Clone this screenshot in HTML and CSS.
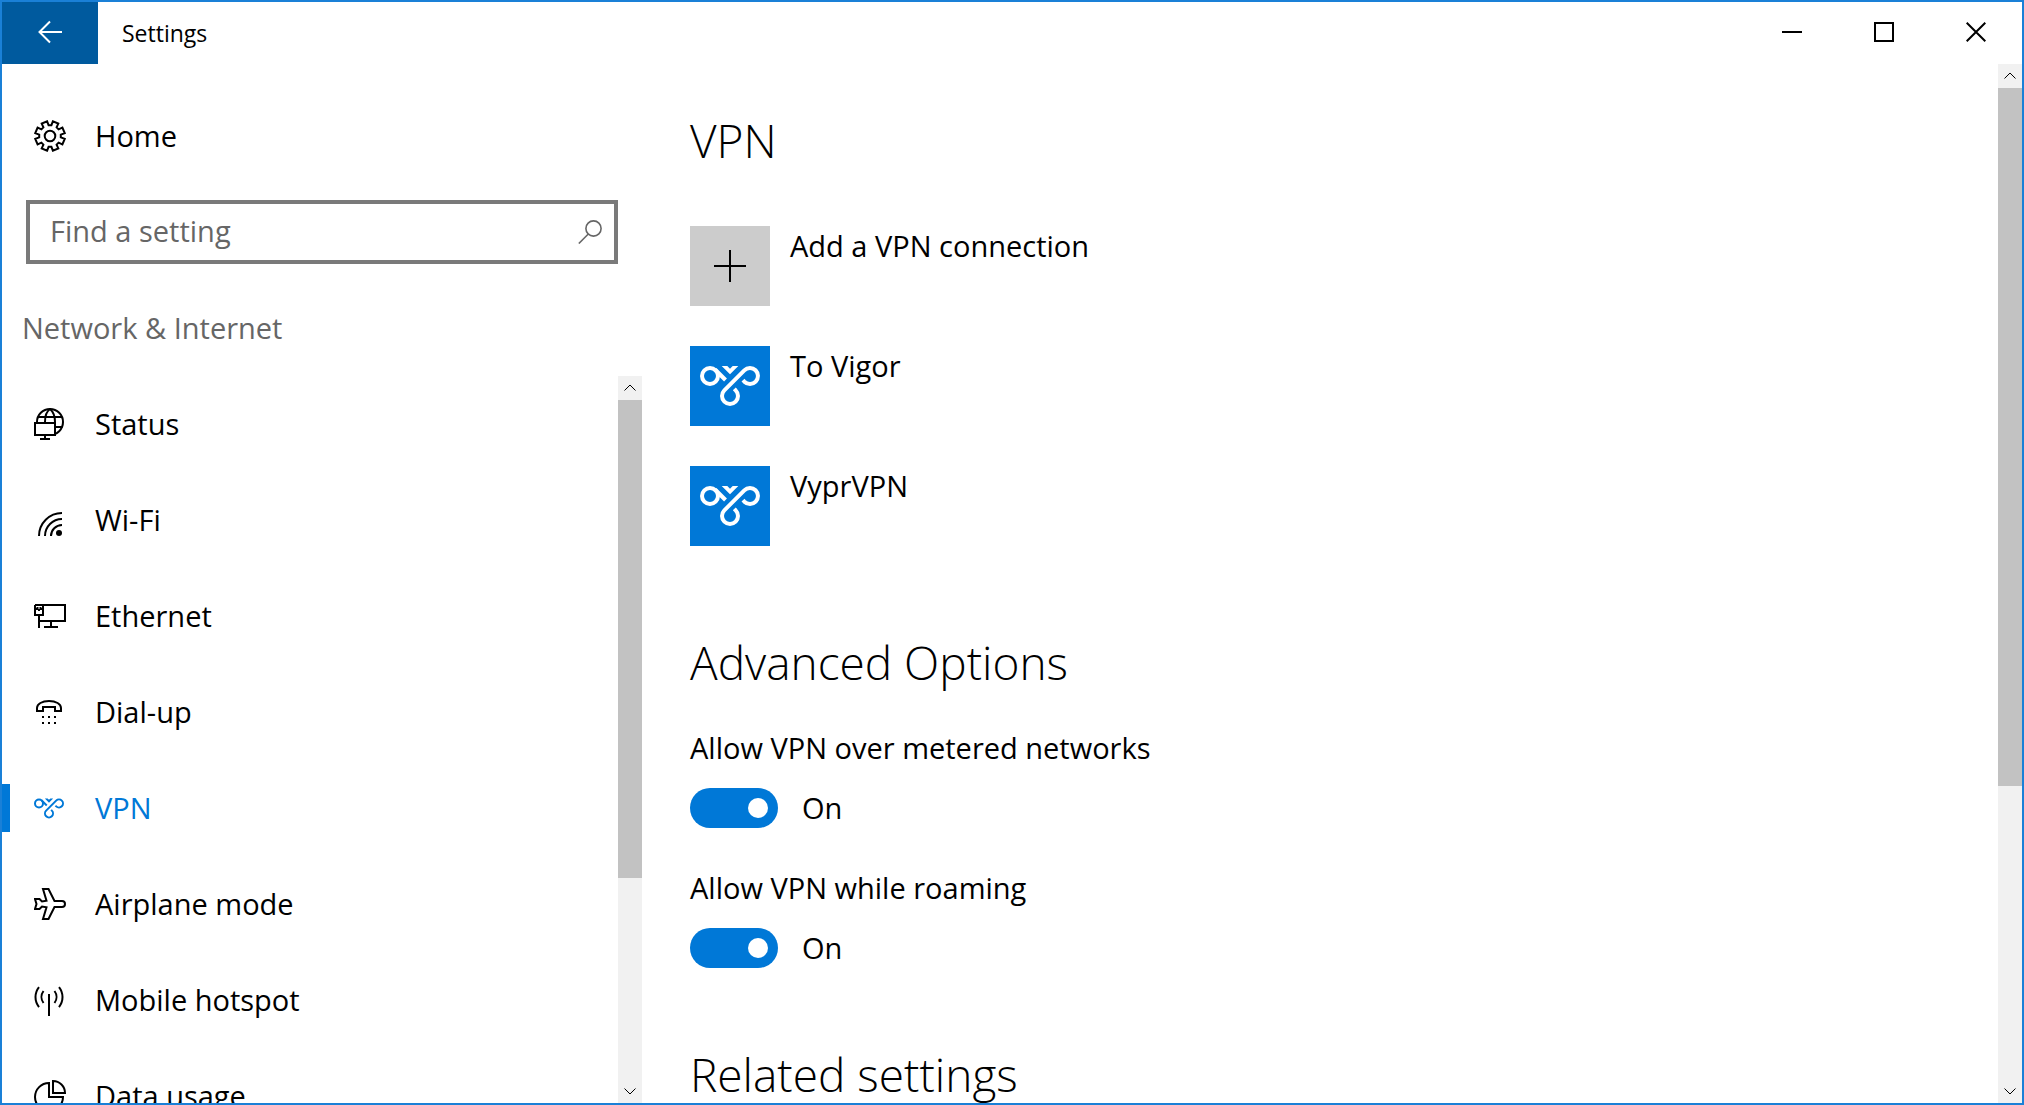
FILE: index.html
```html
<!DOCTYPE html>
<html lang="en">
<head>
  <meta charset="UTF-8" />
  <title>Settings</title>
  <meta name="viewport" content="width=device-width, initial-scale=1.0" />
  <link rel="stylesheet" href="styles.css">
</head>
<body>

<!-- shared icons -->
<svg class="sprite" aria-hidden="true">
  <symbol id="icon-vpn" viewBox="0 0 80 80">
    <g fill="none" stroke="currentColor" stroke-width="4">
      <circle cx="20" cy="30" r="8" />
      <path d="M25 23.5L35.5 34" />
      <path d="M53 34.2L54.4 35.7A8 8 0 1 0 54.3 24.3L34.3 44.3A8 8 0 1 0 45.7 44.3L44.3 42.8" />
    </g>
    <path fill="currentColor" d="M31.7 20H37.3L40 22.7L42.7 20H48.3L40 28.3Z" />
  </symbol>
  <symbol id="icon-up" viewBox="0 0 12 12">
    <path fill="none" stroke="currentColor" d="M.5 8.5L6 3L11.5 8.5" />
  </symbol>
  <symbol id="icon-down" viewBox="0 0 12 12">
    <path fill="none" stroke="currentColor" d="M.5 3.5L6 9L11.5 3.5" />
  </symbol>
</svg>

<div class="window">
  <header class="titlebar">
    <button type="button" class="back-btn" aria-label="Back">
      <svg class="icon-24" viewBox="0 0 24 24"><path d="M24 12H1.5M12 1.5L1.5 12L12 22.5" /></svg>
    </button>
    <span class="title">Settings</span>
    <div class="window-buttons">
      <button type="button" aria-label="Minimize">
        <svg class="icon-20" viewBox="0 0 20 20"><path d="M0 10H20" /></svg>
      </button>
      <button type="button" aria-label="Maximize">
        <svg class="icon-20" viewBox="0 0 20 20"><path d="M1 1H19V19H1Z" /></svg>
      </button>
      <button type="button" aria-label="Close">
        <svg class="icon-20" viewBox="0 0 20 20"><path d="M.7 .7L19.3 19.3M19.3 .7L.7 19.3" /></svg>
      </button>
    </div>
  </header>

  <div class="body">
    <aside class="sidebar">
      <a href="#" class="nav-item home">
        <svg class="icon" viewBox="0 0 32 32">
          <path d="M13.1 1.3L14.6 5.2H17.4L18.9 1.3L24.3 3.6L22.6 7.4L24.6 9.4L28.4 7.7L30.7 13.1L26.8 14.6V17.4L30.7 18.9L28.4 24.3L24.6 22.6L22.6 24.6L24.3 28.4L18.9 30.7L17.4 26.8H14.6L13.1 30.7L7.7 28.4L9.4 24.6L7.4 22.6L3.6 24.3L1.3 18.9L5.2 17.4V14.6L1.3 13.1L3.6 7.7L7.4 9.4L9.4 7.4L7.7 3.6Z" />
          <circle cx="16" cy="16" r="5.3" />
        </svg>
        Home
      </a>

      <form class="search">
        <input type="text" placeholder="Find a setting" aria-label="Find a setting" />
        <button type="submit" aria-label="Search">
          <svg class="icon-24" viewBox="0 0 24 24"><circle cx="15.5" cy="8.5" r="7.6" /><path d="M10.3 14L.8 23.5" /></svg>
        </button>
      </form>

      <h2 class="category">Network &amp; Internet</h2>

      <div class="nav-wrap">
        <nav class="nav">
          <a href="#" class="nav-item">
            <svg class="icon" viewBox="0 0 32 32">
              <circle cx="16" cy="14" r="13" />
              <path d="M4 9H28M16 19H28.5M11 14C11 8 13 3 16 1C19.5 4 21 9 21 14C21 19 19.5 24 16 27" />
              <path class="screen" d="M1 15H21V27H1Z" />
              <path d="M11 27V31M6 31H16" />
            </svg>
            Status
          </a>
          <a href="#" class="nav-item">
            <svg class="icon" viewBox="0 0 32 32">
              <path d="M5 32A23 23 0 0 1 28 9M11 32A17 17 0 0 1 28 15M17 32A11 11 0 0 1 28 21" />
              <circle class="dot" cx="25" cy="29" r="3" />
            </svg>
            Wi-Fi
          </a>
          <a href="#" class="nav-item">
            <svg class="icon" viewBox="0 0 32 32">
              <path d="M1 5H31V21H5M1 5V15H9V5M1 9H3.5V7M9 9H6.5V7M5 9V11M5 15V28M17 21V27M10 27H24" />
            </svg>
            Ethernet
          </a>
          <a href="#" class="nav-item">
            <svg class="icon" viewBox="0 0 32 32">
              <path d="M3 15V12C3 8 8 5 15 5S27 8 27 12V15H21V11H9V15Z" />
              <path d="M8 21H10M14 21H16M20 21H22M8 27H10M14 27H16M20 27H22" />
            </svg>
            Dial-up
          </a>
          <a href="#" class="nav-item active" aria-current="page">
            <svg class="icon-vpn" viewBox="10 7 64 64"><use href="#icon-vpn" width="80" height="80" /></svg>
            VPN
          </a>
          <a href="#" class="nav-item">
            <svg class="icon" viewBox="0 0 32 32">
              <path d="M1 11H5.5L8 13.5L12.5 12.8L9 1H14.5L20.5 13H28C30 13 31 14.5 31 16S30 19 28 19H20.5L14.5 31H9L12.5 19.2L8 18.5L5.5 21H1L2.5 16Z" />
            </svg>
            Airplane mode
          </a>
          <a href="#" class="nav-item">
            <svg class="icon" viewBox="0 0 32 32">
              <path d="M15 10V32M5 3A16 16 0 0 0 5 23M25 3A16 16 0 0 1 25 23M9.5 7A10 10 0 0 0 9.5 19M20.5 7A10 10 0 0 1 20.5 19" />
            </svg>
            Mobile hotspot
          </a>
          <a href="#" class="nav-item">
            <svg class="icon" viewBox="0 0 32 32">
              <path d="M15 3A14 14 0 1 0 29 17H15ZM19 1A12 12 0 0 1 31 13H19Z" />
            </svg>
            Data usage
          </a>
        </nav>
        <div class="scrollbar">
          <button type="button" aria-label="Scroll up"><svg><use href="#icon-up" /></svg></button>
          <div class="track"><div class="thumb"></div></div>
          <button type="button" aria-label="Scroll down"><svg><use href="#icon-down" /></svg></button>
        </div>
      </div>
    </aside>

    <main class="content">
      <h1>VPN</h1>

      <div class="connections">
        <button type="button" class="connection">
          <span class="tile add">
            <svg class="plus" viewBox="0 0 32 32"><path d="M16 0V32M0 16H32" /></svg>
          </span>
          <span class="name">Add a VPN connection</span>
        </button>
        <button type="button" class="connection">
          <span class="tile"><svg class="tile-icon"><use href="#icon-vpn" /></svg></span>
          <span class="name">To Vigor</span>
        </button>
        <button type="button" class="connection">
          <span class="tile"><svg class="tile-icon"><use href="#icon-vpn" /></svg></span>
          <span class="name">VyprVPN</span>
        </button>
      </div>

      <h1>Advanced Options</h1>

      <div class="options">
        <div class="option">
          <label for="metered">Allow VPN over metered networks</label>
          <div class="toggle-row">
            <input type="checkbox" class="toggle" id="metered" checked />
            <span>On</span>
          </div>
        </div>
        <div class="option">
          <label for="roaming">Allow VPN while roaming</label>
          <div class="toggle-row">
            <input type="checkbox" class="toggle" id="roaming" checked />
            <span>On</span>
          </div>
        </div>
      </div>

      <h1>Related settings</h1>
    </main>

    <div class="scrollbar">
      <button type="button" aria-label="Scroll up"><svg><use href="#icon-up" /></svg></button>
      <div class="track"><div class="thumb"></div></div>
      <button type="button" aria-label="Scroll down"><svg><use href="#icon-down" /></svg></button>
    </div>
  </div>
</div>

</body>
</html>
```
FILE: styles.css
```css
* {
  box-sizing: border-box;
}

body {
  margin: 0;
  font-family: "Segoe UI", "Open Sans", "Noto Sans", sans-serif;
  font-size: 29px;
  line-height: 40px;
  color: #000;
  background: #fff;
  overflow: hidden;
}

button, input {
  font: inherit;
  color: inherit;
  border: none;
  padding: 0;
  background: none;
}

a {
  color: inherit;
  text-decoration: none;
}

svg {
  display: block;
  fill: none;
  stroke: currentColor;
  stroke-width: 2;
}

.sprite {
  display: none;
}

.window {
  display: flex;
  flex-direction: column;
  height: 100vh;
  border: 2px solid #1a80d7;
  overflow: hidden;
}

/* title bar */
.titlebar {
  display: flex;
  align-items: stretch;
  flex: 0 0 62px;
}

.titlebar button {
  display: flex;
  align-items: center;
  justify-content: center;
  width: 92px;
  padding-bottom: 2px;
}

.titlebar .back-btn {
  width: 96px;
  color: #fff;
  background: #005a9e;
}

.title {
  align-self: center;
  margin-left: 24px;
  font-size: 23px;
}

.window-buttons {
  display: flex;
  margin-left: auto;
}

.icon-20 {
  width: 20px;
  height: 20px;
}

.icon-24 {
  width: 24px;
  height: 24px;
}

.body {
  display: flex;
  flex: 1;
  min-height: 0;
}

/* sidebar */
.sidebar {
  display: flex;
  flex-direction: column;
  flex: 0 0 640px;
}

.nav-item {
  display: flex;
  align-items: center;
  gap: 29px;
  flex: 0 0 96px;
  padding-left: 32px;
}

.icon, .icon-vpn {
  width: 32px;
  height: 32px;
}

.icon-vpn {
  stroke: none;
}

.icon .screen {
  fill: #fff;
}

.icon .dot {
  fill: currentColor;
  stroke: none;
}

.home {
  margin: 24px 0 16px;
}

.search {
  display: flex;
  align-items: center;
  height: 64px;
  margin: 0 24px;
  padding: 0 12px 0 20px;
  border: 4px solid #7a7a7a;
  color: #666;
}

.search input {
  flex: 1;
  min-width: 0;
  padding-bottom: 2px;
  outline: none;
}

.search svg {
  stroke-width: 1.6;
}

.search input::placeholder {
  color: #666;
  opacity: 1;
}

.category {
  margin: 44px 0 28px;
  padding-left: 20px;
  font-size: 29px;
  font-weight: normal;
  color: #666;
}

.nav-wrap {
  display: flex;
  flex: 1;
  min-height: 0;
}

.nav {
  display: flex;
  flex-direction: column;
  flex: 1;
  overflow: hidden;
}

.nav-item.active {
  color: #0078d7;
}

.nav-item.active::before {
  content: "";
  width: 8px;
  height: 48px;
  margin: 0 -5px 0 -32px;
  background: #0078d7;
}

/* scrollbars */
.scrollbar {
  display: flex;
  flex-direction: column;
  flex: 0 0 24px;
  background: #f1f1f1;
}

.scrollbar button {
  display: flex;
  align-items: center;
  justify-content: center;
  height: 24px;
}

.scrollbar svg {
  width: 12px;
  height: 12px;
  stroke-width: 1;
}

.track {
  flex: 1;
}

.thumb {
  height: 70.4%;
  background: #c2c2c2;
}

/* content */
.content {
  flex: 1;
  min-width: 0;
  padding: 44px 48px 0;
  overflow: hidden;
}

h1 {
  margin: 0;
  font-size: 46px;
  font-weight: 300;
  line-height: 64px;
}

.connections {
  display: flex;
  flex-direction: column;
  gap: 40px;
  margin: 54px 0 84px;
}

.connection {
  display: flex;
  gap: 20px;
  text-align: left;
}

.tile {
  display: flex;
  align-items: center;
  justify-content: center;
  width: 80px;
  height: 80px;
  color: #fff;
  background: #0078d7;
}

.tile.add {
  color: #000;
  background: #ccc;
}

.plus {
  width: 32px;
  height: 32px;
}

.tile-icon {
  width: 80px;
  height: 80px;
  stroke: none;
}

.options {
  display: flex;
  flex-direction: column;
  gap: 40px;
  margin: 34px 0 74px;
}

.option label {
  display: block;
  margin-bottom: 20px;
}

.toggle-row {
  display: flex;
  align-items: center;
  gap: 24px;
}

.toggle {
  appearance: none;
  display: flex;
  align-items: center;
  justify-content: flex-end;
  width: 88px;
  height: 40px;
  margin: 0;
  padding: 0 10px;
  border-radius: 20px;
  background: #0078d7;
}

.toggle::before {
  content: "";
  width: 20px;
  height: 20px;
  border-radius: 50%;
  background: #fff;
}

.toggle:not(:checked) {
  justify-content: flex-start;
  background: #7a7a7a;
}
```
